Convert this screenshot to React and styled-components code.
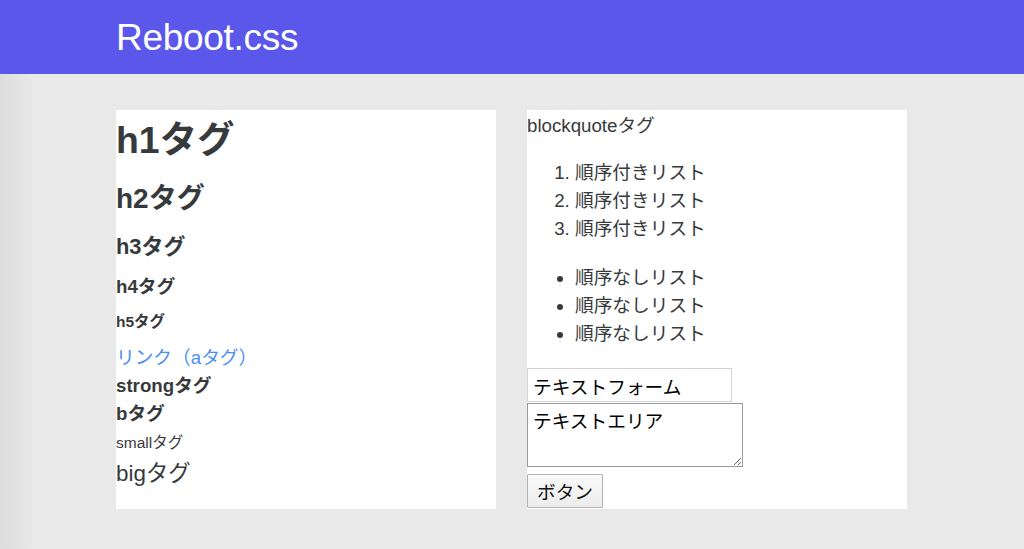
import React from 'react'
import styled, { createGlobalStyle } from 'styled-components'

const GlobalStyle = createGlobalStyle`
  html, body {
    margin: 0;
    padding: 0;
  }
  body {
    min-height: 549px;
    background: linear-gradient(to right, #dcdcdc 0px, #e9e9e9 34px, #e9e9e9 100%);
    color: #373a3c;
    font-family: "Liberation Sans", "Noto Sans CJK JP", sans-serif;
    font-size: 18.7px;
    line-height: 28px;
  }
`

const Header = styled.header`
  height: 74px;
  background: #5b57eb;
`

const Container = styled.div`
  width: 792px;
  margin: 0 auto;
`

const Title = styled.h1`
  margin: 0;
  color: #fff;
  font-size: 37px;
  font-weight: 400;
  line-height: 76px;
  letter-spacing: -0.3px;
`

const Main = styled.main`
  padding-top: 36px;
`

const Columns = styled.div`
  display: grid;
  grid-template-columns: 380px 380px;
  gap: 31px;
`

const Panel = styled.section`
  background: #fff;
  display: flex;
  flex-direction: column;
  align-items: flex-start;
  padding-bottom: ${p => p.$bottom || 0}px;
`

const sizes = {
  1: { f: 37.4, mt: 7.5 },
  2: { f: 28, mt: 19.5 },
  3: { f: 21.9, mt: 18.5 },
  4: { f: 18.7, mt: 15.7 },
  5: { f: 15.5, mt: 14.6 },
}

const Heading = styled.div`
  margin: ${p => sizes[p.$level].mt}px 0 0;
  font-size: ${p => sizes[p.$level].f}px;
  line-height: 1.2;
  font-weight: 700;
`

const Link = styled.a`
  display: block;
  margin-top: 12.4px;
  color: #4a8ff0;
  text-decoration: none;
`

const Line = styled.div`
  margin-top: ${p => p.$mt || 0}px;
  font-size: ${p => p.$size || 18.7}px;
  line-height: ${p => p.$lh || 28}px;
  font-weight: ${p => (p.$bold ? 700 : 400)};
`

const Quote = styled.blockquote`
  margin: 1.5px 0 0;
`

const List = styled.ol`
  margin: ${p => p.$mt}px 0 0;
  padding-left: 48px;
  list-style: ${p => (p.$bullet ? 'disc' : 'decimal')};

  li::marker {
    font-size: 18.7px;
  }
`

const TextInput = styled.input`
  box-sizing: border-box;
  margin-top: 20.5px;
  width: 205px;
  height: 34px;
  padding: 0 5px;
  border: 1px solid #d6d6d6;
  border-top-color: #cfcfcf;
  border-radius: 0;
  background: #fff;
  color: #000;
  font-family: "Noto Sans CJK JP", sans-serif;
  font-size: 18.7px;
  outline: none;
`

const TextArea = styled.textarea`
  box-sizing: border-box;
  display: block;
  margin-top: 1px;
  width: 216px;
  height: 64px;
  padding: 3px 5px;
  border: 1px solid #9a9a9a;
  border-radius: 0;
  color: #000;
  font-family: "Noto Sans CJK JP", sans-serif;
  font-size: 18.7px;
  line-height: 26px;
  outline: none;
`

const Button = styled.button`
  box-sizing: border-box;
  margin-top: 7px;
  width: 76px;
  height: 34px;
  padding: 0 8px;
  border: 1px solid #b4b4b4;
  border-radius: 1px;
  background: linear-gradient(#fafafa, #ececec);
  color: #111;
  font-family: "Noto Sans CJK JP", sans-serif;
  font-size: 18.7px;
  line-height: 1;
`

const ordered = ['順序付きリスト', '順序付きリスト', '順序付きリスト']
const unordered = ['順序なしリスト', '順序なしリスト', '順序なしリスト']

export default function App() {
  return (
    <>
      <GlobalStyle />
      <Header>
        <Container>
          <Title>Reboot.css</Title>
        </Container>
      </Header>
      <Main>
        <Container>
          <Columns>
            <Panel $bottom={18}>
              <Heading $level={1}>h1タグ</Heading>
              <Heading $level={2}>h2タグ</Heading>
              <Heading $level={3}>h3タグ</Heading>
              <Heading $level={4}>h4タグ</Heading>
              <Heading $level={5}>h5タグ</Heading>
              <Link href="#">リンク（aタグ）</Link>
              <Line $bold>strongタグ</Line>
              <Line $bold>bタグ</Line>
              <Line $size={15.5} $mt={1}>smallタグ</Line>
              <Line $size={22.4} $lh={33.6}>bigタグ</Line>
            </Panel>
            <Panel>
              <Quote>blockquoteタグ</Quote>
              <List $mt={19}>
                {ordered.map((t, i) => <li key={i}>{t}</li>)}
              </List>
              <List as="ul" $mt={21} $bullet>
                {unordered.map((t, i) => <li key={i}>{t}</li>)}
              </List>
              <TextInput defaultValue="テキストフォーム" />
              <TextArea defaultValue="テキストエリア" />
              <Button>ボタン</Button>
            </Panel>
          </Columns>
        </Container>
      </Main>
    </>
  )
}
